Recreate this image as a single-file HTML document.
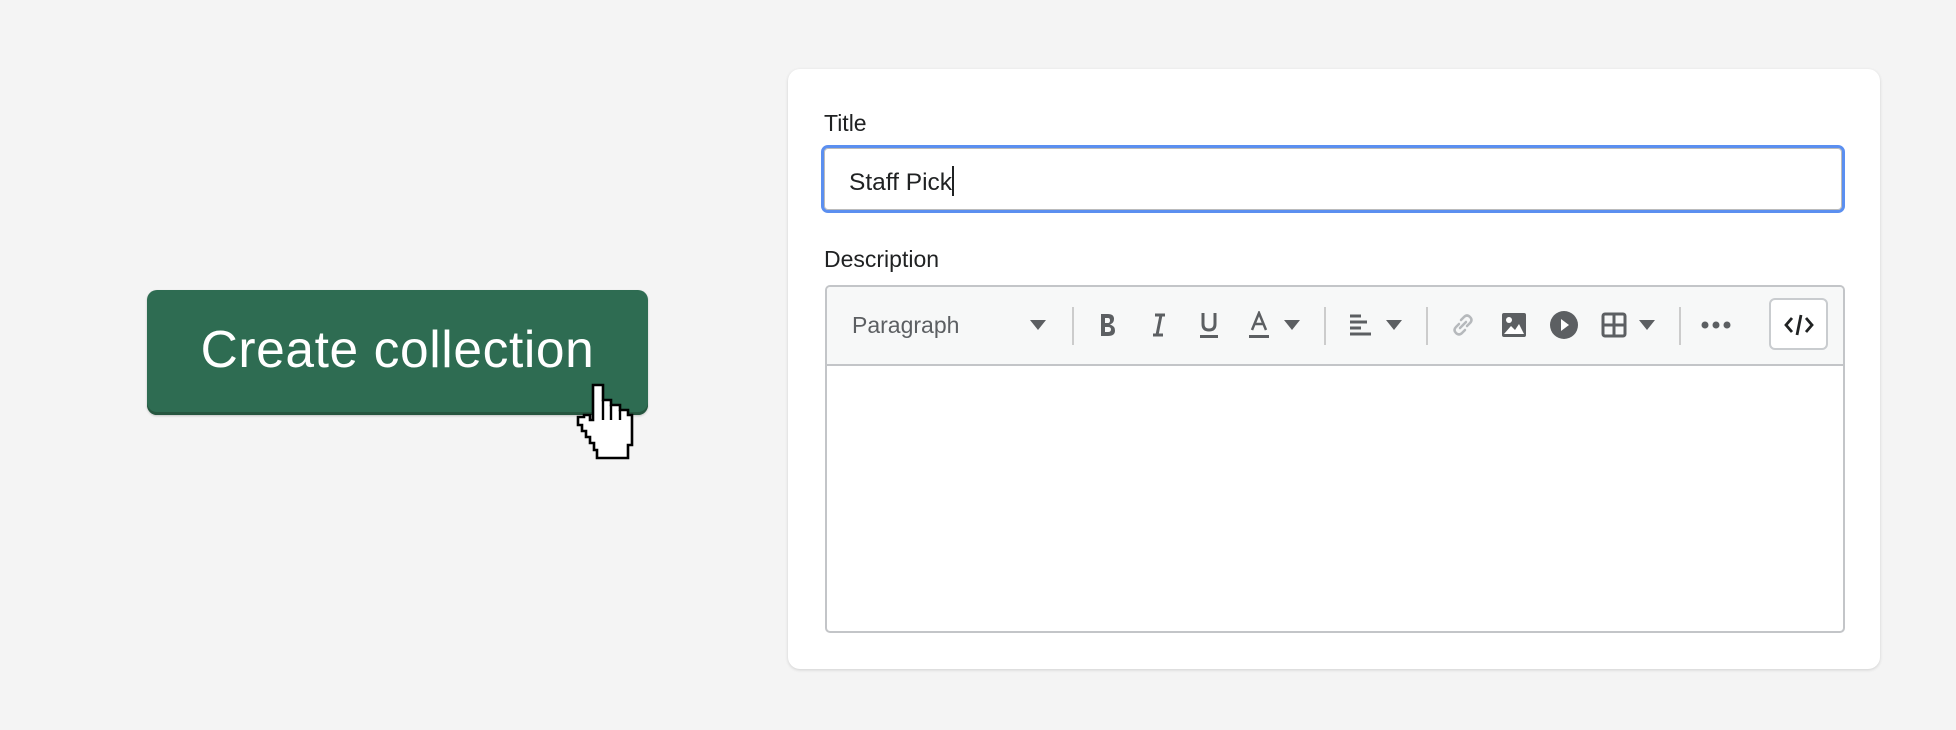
<!DOCTYPE html>
<html><head><meta charset="utf-8"><style>
html,body{margin:0;padding:0}
body{width:1956px;height:730px;background:#f4f4f4;position:relative;overflow:hidden;font-family:"Liberation Sans",sans-serif;color:#202223}
.btn{position:absolute;left:147px;top:290px;width:501px;height:125px;background:#2e6c52;border-radius:10px;box-shadow:inset 0 -3px 0 #26563f,0 1px 2px rgba(0,0,0,.2);color:#fff;font-size:51.5px;text-align:center;line-height:118px;letter-spacing:.6px}
.card{position:absolute;left:788px;top:69px;width:1092px;height:600px;background:#fff;border-radius:12px;box-shadow:0 1px 3px rgba(0,0,0,.15)}
.lbl{position:absolute;font-size:23px;color:#202223}
.input{position:absolute;left:821px;top:145px;width:1024px;height:68px;border:3px solid #5b8ff0;border-radius:7px;box-sizing:border-box;box-shadow:inset 0 0 0 1px #bbb}
.input span{position:absolute;left:25px;top:18px;font-size:24.5px;white-space:nowrap}
.input i{display:inline-block;vertical-align:-6px;width:2px;height:30px;background:#202223}
.editor{position:absolute;left:825px;top:285px;width:1020px;height:348px;border:2px solid #c3c5c8;border-radius:5px;box-sizing:border-box;overflow:hidden}
.tb{position:absolute;left:0;top:0;right:0;height:77px;background:#f7f8f8;border-bottom:2px solid #c3c5c8}
.ic{position:absolute;top:38px;transform:translate(-50%,-50%)}
.sep{position:absolute;top:20px;width:2px;height:38px;background:#ccc}
.code{position:absolute;left:942px;top:11px;width:59px;height:52px;border:2px solid #c9cccf;border-radius:6px;background:#fff;box-sizing:border-box}
</style></head><body>
<div class="btn">Create collection</div>
<svg style="position:absolute;left:570px;top:375px" width="75" height="90" viewBox="0 0 75 90"><polygon points="23,10 33,10 33,25 41,25 41,30 50,30 50,35 58,35 58,40 62,40 62,70 58,70 58,83 27,83 27,75 24,75 24,68 20,68 20,62 16,62 16,56 12,56 12,50 8,50 8,42 14,42 14,40 20,40 20,45 23,45" fill="#fff" stroke="#000" stroke-width="2.6" stroke-linejoin="miter"/><path d="M33 25V45M41 30V45M50 35V45" stroke="#000" stroke-width="2.4"/></svg>
<div class="card"></div>
<div class="lbl" style="left:824px;top:110px">Title</div>
<div class="input"><span>Staff Pick<i></i></span></div>
<div class="lbl" style="left:824px;top:246px">Description</div>
<div class="editor"><div class="tb">
<div style="position:absolute;left:25px;top:25px;font-size:23px;color:#5c5f62">Paragraph</div>
<svg class="ic" style="left:211px" width="16" height="10"><path d="M0 0H16L8 10Z" fill="#5c5f62"/></svg>
<div class="sep" style="left:245px"></div>
<svg class="ic" style="left:281px" width="20" height="26"><path d="M3 2H10Q16 2 16 7Q16 11 12 12.5Q17 14 17 18.5Q17 24 10 24H3Z M7 6V11H10Q12 11 12 8.5Q12 6 10 6Z M7 15V20H10Q13 20 13 17.5Q13 15 10 15Z" fill="#5c5f62" fill-rule="evenodd"/></svg>
<svg class="ic" style="left:332px" width="18" height="26"><path d="M5 3H15M3 23H13M11 3L7 23" stroke="#5c5f62" stroke-width="3" fill="none"/></svg>
<svg class="ic" style="left:382px" width="22" height="28"><path d="M5 2V13Q5 19 11 19Q17 19 17 13V2" stroke="#5c5f62" stroke-width="3" fill="none"/><rect x="2" y="24" width="18" height="3" fill="#5c5f62"/></svg>
<svg class="ic" style="left:432px" width="22" height="28"><path d="M4 19L11 2L18 19M7 13H15" stroke="#5c5f62" stroke-width="2.5" fill="none"/><rect x="1" y="24" width="20" height="3" fill="#5c5f62"/></svg>
<svg class="ic" style="left:465px" width="16" height="10"><path d="M0 0H16L8 10Z" fill="#5c5f62"/></svg>
<div class="sep" style="left:497px"></div>
<svg class="ic" style="left:534px" width="24" height="24"><path d="M1 3H12M1 9H18M1 15H12M1 21H22" stroke="#5c5f62" stroke-width="3"/></svg>
<svg class="ic" style="left:567px" width="16" height="10"><path d="M0 0H16L8 10Z" fill="#5c5f62"/></svg>
<div class="sep" style="left:599px"></div>
<svg class="ic" style="left:636px" width="26" height="26"><path d="M11 8L14 5Q17 2 20 5Q23 8 20 11L17 14M15 18L12 21Q9 24 6 21Q3 18 6 15L9 12M10 16L16 10" stroke="#b6b9bc" stroke-width="2.5" fill="none" stroke-linecap="round"/></svg>
<svg class="ic" style="left:687px" width="26" height="26"><rect x="1" y="1" width="24" height="24" rx="2" fill="#5c5f62"/><circle cx="8" cy="8" r="3" fill="#fff"/><path d="M3 22L10 14L14 18L18 12L23 22Z" fill="#fff"/></svg>
<svg class="ic" style="left:737px" width="28" height="28"><circle cx="14" cy="14" r="14" fill="#5c5f62"/><path d="M11 8L19 14L11 20Z" fill="#fff"/></svg>
<svg class="ic" style="left:787px" width="26" height="26"><rect x="2" y="2" width="22" height="22" rx="2" fill="none" stroke="#5c5f62" stroke-width="3"/><path d="M13 2V24M2 13H24" stroke="#5c5f62" stroke-width="3"/></svg>
<svg class="ic" style="left:820px" width="16" height="10"><path d="M0 0H16L8 10Z" fill="#5c5f62"/></svg>
<div class="sep" style="left:852px"></div>
<svg class="ic" style="left:889px" width="30" height="8"><circle cx="4" cy="4" r="3.5" fill="#5c5f62"/><circle cx="15" cy="4" r="3.5" fill="#5c5f62"/><circle cx="26" cy="4" r="3.5" fill="#5c5f62"/></svg>
<div class="code"><svg style="position:absolute;left:13px;top:12px" width="30" height="26"><path d="M8 6L2 13L8 20M22 6L28 13L22 20M17 3L13 23" stroke="#202223" stroke-width="2.8" fill="none"/></svg></div>
</div></div>
</body></html>
